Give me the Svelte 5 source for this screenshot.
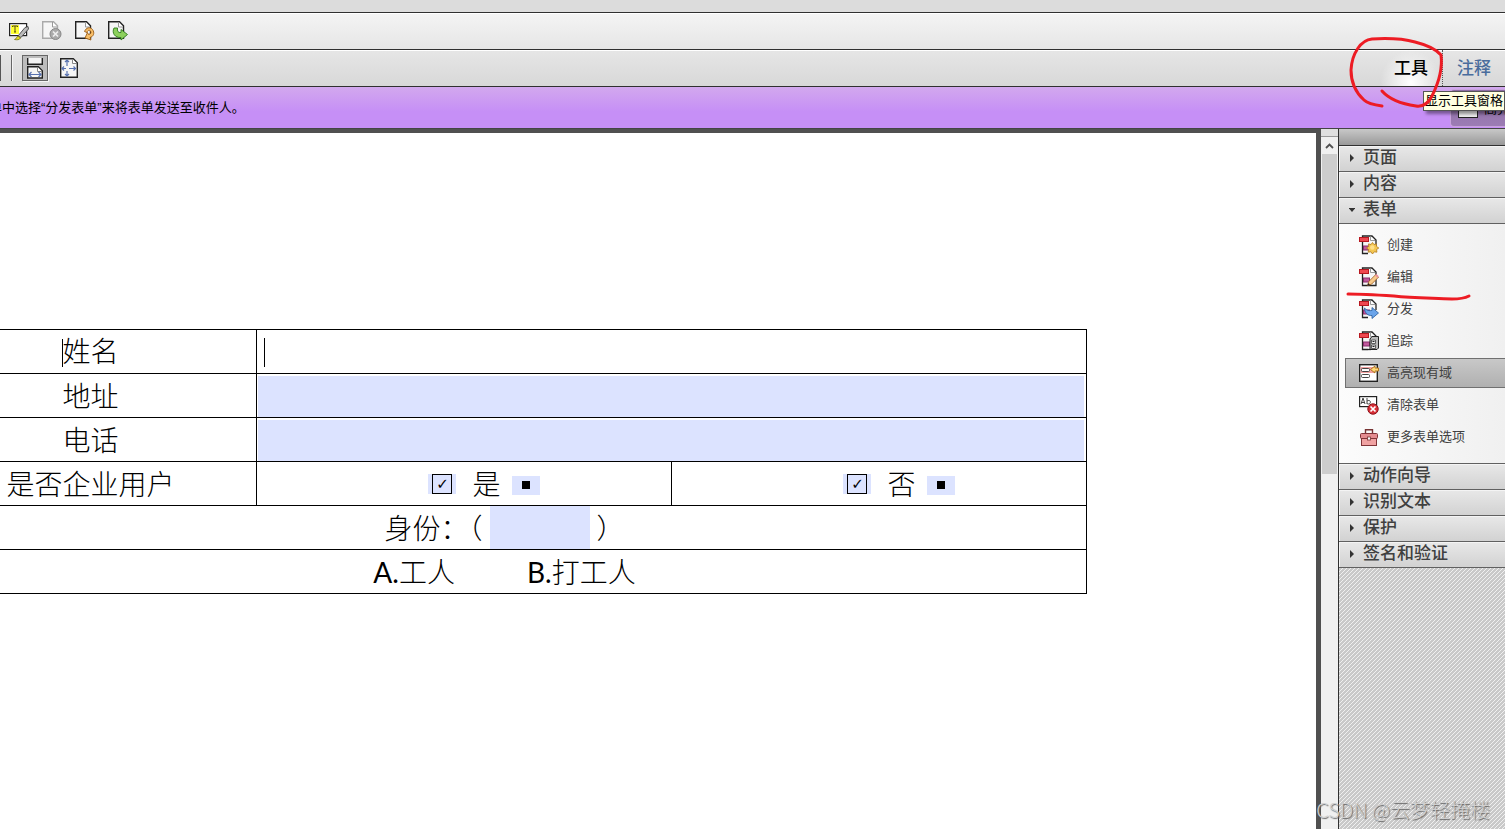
<script lang="ts">
	type Section = { title: string; open?: boolean };

	const top: Section[] = [{ title: '页面' }, { title: '内容' }, { title: '表单', open: true }];
	const bottom: Section[] = [
		{ title: '动作向导' },
		{ title: '识别文本' },
		{ title: '保护' },
		{ title: '签名和验证' }
	];

	const formTools = [
		{ icon: 'create', label: '创建' },
		{ icon: 'edit', label: '编辑' },
		{ icon: 'send', label: '分发' },
		{ icon: 'track', label: '追踪' },
		{ icon: 'highlight', label: '高亮现有域' },
		{ icon: 'clear', label: '清除表单' },
		{ icon: 'more', label: '更多表单选项' }
	];

	let active = $state('highlight');
	let name = $state('');
	let address = $state('');
	let phone = $state('');
	let identity = $state('');
	let yes = $state(true);
	let no = $state(true);
</script>

{#snippet sheet(color: string)}
	<path d="M.7 .7h10.800l4 4v12.600H.7z" fill="#f6f6f6" stroke={color} stroke-width="1.4" />
	<path d="M10.500 1v5H15" fill="#fff" stroke="#999" />
{/snippet}

{#snippet pdf()}
	<path d="M3.500 1.500h10l3.500 3.500v13.500H3.500z" fill="#f6f6f6" />
	<path d="M3.500 2V1H13l4 4v6M3.500 7v11.500H9" fill="none" stroke="#222" stroke-width="1.300" />
	<path d="M11.500 1.500v4H16" fill="#fff" stroke="#999" />
	<rect x="4.500" y="11" width="6" height="4" fill="#c05a9c" stroke="#8a2c6c" />
	<rect x=".5" y="2.500" width="9" height="4" fill="#ee4850" stroke="#b81820" />
{/snippet}

{#snippet toolIcon(kind: string)}
	<svg class="icon" width="20" height="20" viewBox="0 0 20 20" aria-hidden="true">
		{#if kind === 'create'}
			{@render pdf()}
			<path d="M13.500 7.500l1.500 2 2.500-.6-.1 2.500 2.400 1.600-2.200 1.500.3 2.700-2.600-.4-1.800 2.200-1.600-2.200-2.700.4.400-2.700L7.500 13l2.200-1.600-.2-2.500 2.500.6z" fill="#f3c650" stroke="#b27a1c" stroke-width=".8" />
			<circle cx="13.300" cy="12.500" r="2.200" fill="#ffe08a" />
		{:else if kind === 'edit'}
			{@render pdf()}
			<path d="M17 12v6.500H9" fill="none" stroke="#222" stroke-width="1.300" />
			<path d="M8.500 18.500l1.300-4 7-7 2.700 2.700-7 7z" fill="#f8ca8a" stroke="#9a5a20" stroke-width=".8" />
			<path d="M16 8.300l1.500-1.400 2.300 2.300-1.500 1.500z" fill="#e8909a" />
			<path d="M8.300 18.700l.9-2.600 1.700 1.700z" fill="#222" />
		{:else if kind === 'send'}
			{@render pdf()}
			<path d="M5.500 9c2 2.500 4.500 3 7.500 2.500V8.500l6.500 5.500-6.500 5.500v-3C9 17 5.500 14 5.500 9z" fill="#6aa4ea" stroke="#245a9c" stroke-width=".8" />
		{:else if kind === 'track'}
			{@render pdf()}
			<path d="M9 18.500h3" stroke="#222" stroke-width="1.300" />
			<path d="M11 8l2-2.500h6.500V17L18 18.500h-7z" fill="#bbb" stroke="#222" />
			<path d="M12.500 9h4v3.500h-4zM12.500 14h4v3.500h-4z" fill="#eee" stroke="#444" stroke-width=".8" />
			<path d="M13.500 10.500h2M13.500 15.500h2" stroke="#222" />
		{:else if kind === 'highlight'}
			<rect x=".7" y="1.700" width="17.600" height="16.600" fill="#fff" stroke="#222" stroke-width="1.400" />
			<rect x="1.500" y="4" width="14" height="6" fill="#f2a0a0" />
			<rect x="2.500" y="5.500" width="8" height="3" rx="1" fill="#fff" stroke="#444" />
			<rect x="2.500" y="11.500" width="8" height="3" rx="1" fill="#fff" stroke="#444" />
			<path d="M11.500 6.500L16 3v2h3.500v3H16v2z" fill="#ffd878" stroke="#a86a10" stroke-width=".9" />
		{:else if kind === 'clear'}
			<rect x=".6" y="1.600" width="17" height="10" fill="#fff" stroke="#222" stroke-width="1.200" />
			<path d="M2 9l2-6 2 6M2.700 7.500h2.800M8 3v6M8 6c3-1.500 4 .5 3 2.500-1 .8-2 .6-3 0" fill="none" stroke="#444" />
			<circle cx="14" cy="14" r="5.200" fill="#d83038" stroke="#8e1018" />
			<path d="M11.500 11.500l5 5M16.500 11.500l-5 5" stroke="#fff" stroke-width="1.700" />
		{:else}
			<path d="M6.500 6V2.700h7V6" fill="none" stroke="#733" stroke-width="1.400" />
			<rect x="1.500" y="6.500" width="17" height="5" rx="1" fill="#e48c90" stroke="#803438" />
			<rect x="2.500" y="11.500" width="15" height="7" fill="#f0a2a2" stroke="#803438" />
			<rect x="8.500" y="10" width="3" height="3" fill="#fff" stroke="#733" stroke-width=".8" />
		{/if}
	</svg>
{/snippet}

{#snippet heading(section: Section)}
	<button class="heading" aria-expanded={!!section.open}>
		<svg width="6" height="8" viewBox="0 0 6 8" aria-hidden="true">
			{#if section.open}
				<path d="M-.5 2h7L3 6z" fill="#333" />
			{:else}
				<path d="M1 0l4 4-4 4z" fill="#333" />
			{/if}
		</svg>
		{section.title}
	</button>
{/snippet}

<div class="app">
	<div class="strip"></div>

	<div class="bar files">
		<button aria-label="高亮文本">
			<svg width="20" height="20" viewBox="0 0 20 20">
				<rect x=".6" y="2.600" width="17" height="12" fill="#fff" stroke="#222" stroke-width="1.200" />
				<rect x="2" y="4" width="8" height="9" fill="#ffff35" />
				<path d="M3.500 6V5h5v1M6 5v6M5 11h2" fill="none" stroke="#554a10" />
				<path d="M9 15l7-8.500 3-1 .5 2.500-7.500 8.500z" fill="#bbb" stroke="#444" stroke-width=".9" />
				<path d="M9 15l2.500 2c-1 2-3.500 2-6 1.500 2-.5 2-2.500 3.500-3.500z" fill="#e3dc26" stroke="#777016" stroke-width=".8" />
			</svg>
		</button>
		<button aria-label="删除" disabled>
			<svg width="20" height="20" viewBox="0 0 20 20">
				{@render sheet('#aaa')}
				<circle cx="13.500" cy="13" r="5.500" fill="#aaa" stroke="#888" />
				<path d="M11 10.500l5 5M16 10.500l-5 5" stroke="#eee" stroke-width="1.700" />
			</svg>
		</button>
		<button aria-label="恢复">
			<svg width="20" height="20" viewBox="0 0 20 20">
				{@render sheet('#222')}
				<path d="M9.500 10.500C11 6.500 15 5.500 17.500 8.500c2.500 3.500 1 7-2.500 8l1 2.500-6-2 2.500-5.500 1 2c2.500-.5 3-2 2-3.500-1.500-1.500-3-.5-3.500 1.500z" fill="#f8bf68" stroke="#9a5a14" stroke-width=".9" />
			</svg>
		</button>
		<button aria-label="导出">
			<svg width="20" height="20" viewBox="0 0 20 20">
				{@render sheet('#222')}
				<path d="M6 7c-2.500 5 1 10 7 9.500V19l6.500-5.500L13 8.500V11.500C10 12 9 10 9.500 7z" fill="#8dd05c" stroke="#2d7a1c" stroke-width=".9" />
			</svg>
		</button>
	</div>

	<div class="bar view">
		<span class="edge"></span>
		<span class="divider"></span>
		<button class="pressed" aria-label="适合宽度">
			<svg width="18" height="22" viewBox="0 0 18 22">
				<path d="M1.700 1v6.300h14.600V1" fill="#f4f4f4" stroke="#222" stroke-width="1.400" />
				<path d="M1.700 21V9.700h10.600l4 4V21z" fill="#f6f6f6" stroke="#222" stroke-width="1.400" />
				<path d="M11.500 10v4.500H16" fill="#fff" stroke="#888" />
				<path d="M3 17.500h12M5.500 15l-2.500 2.500L5.500 20M12.500 15l2.500 2.500-2.500 2.500" fill="none" stroke="#5872b0" stroke-width="1.200" />
			</svg>
		</button>
		<button class="fit" aria-label="适合页面">
			<svg width="18" height="20" viewBox="0 0 18 20">
				<path d="M.7 .7h12.600l4 4v14.600H.7z" fill="#f6f6f6" stroke="#222" stroke-width="1.400" />
				<path d="M12.500 1v4.500H17" fill="#fff" stroke="#888" />
				<path d="M7 8V2M5 4l2-2 2 2M7 13v5M5 16l2 2 2-2M6 10.500H2M4 8.500l-2 2 2 2M9 10.500h6.500M13.500 8.500l2 2-2 2" fill="none" stroke="#5872b0" stroke-width="1.200" />
			</svg>
		</button>
		<nav>
			<button class="tab current">工具</button>
			<button class="tab">注释</button>
			<span class="tooltip" role="tooltip">显示工具窗格</span>
		</nav>
	</div>

	<div class="message">
		<p>单中选择“分发表单”来将表单发送至收件人。</p>
		<button><span class="field"></span>高亮现有域</button>
	</div>

	<div class="body">
		<main>
			<div class="page">
				<table>
					<colgroup>
						<col class="first" />
						<col />
						<col />
					</colgroup>
					<tbody>
						<tr>
							<th><span class="caret"></span><label for="name">姓名</label></th>
							<td colspan="2"><input id="name" class="text plain" bind:value={name} /><span class="cursor"></span></td>
						</tr>
						<tr>
							<th><label for="address">地址</label></th>
							<td colspan="2"><input id="address" class="text" bind:value={address} /></td>
						</tr>
						<tr>
							<th><label for="phone">电话</label></th>
							<td colspan="2"><input id="phone" class="text" bind:value={phone} /></td>
						</tr>
						<tr>
							<th>是否企业用户</th>
							<td>
								<div class="choice">
									<span class="tick"><input id="yes" type="checkbox" bind:checked={yes} /></span>
									<label for="yes">是</label>
									<input class="dot" type="radio" name="yes" aria-label="是" checked />
								</div>
							</td>
							<td>
								<div class="choice">
									<span class="tick"><input id="no" type="checkbox" bind:checked={no} /></span>
									<label for="no">否</label>
									<input class="dot" type="radio" name="no" aria-label="否" checked />
								</div>
							</td>
						</tr>
						<tr>
							<td colspan="3">
								<div class="identity">
									<label for="identity">身份：（</label>
									<input id="identity" bind:value={identity} />
									<span>）</span>
								</div>
							</td>
						</tr>
						<tr>
							<td colspan="3">
								<div class="answers">
									<span><b>A.</b>工人</span>
									<span><b>B.</b>打工人</span>
								</div>
							</td>
						</tr>
					</tbody>
				</table>
			</div>
		</main>

		<div class="scroll">
			<div class="split"></div>
			<button aria-label="向上滚动">
				<svg width="9" height="6" viewBox="0 0 9 6"><path d="M1 5l3.500-3.500L8 5" fill="none" stroke="#505050" stroke-width="1.800" /></svg>
			</button>
			<div class="track"><div class="thumb"></div></div>
		</div>

		<aside>
			<div class="cap"></div>
			{#each top as section}
				{@render heading(section)}
			{/each}
			<ul>
				{#each formTools as tool}
					<li>
						<button class="tool" class:active={active === tool.icon} onclick={() => (active = tool.icon)}>
							{@render toolIcon(tool.icon)}
							<span>{tool.label}</span>
						</button>
					</li>
				{/each}
			</ul>
			{#each bottom as section}
				{@render heading(section)}
			{/each}
			<div class="hatch"></div>
		</aside>
	</div>

	<svg class="marks" width="160" height="310" viewBox="1345 0 160 310" aria-hidden="true">
		<path d="M1382 106C1374 105 1368 104 1364 100C1354 91 1351 81 1351 70C1352 53 1361 40 1372 39C1389 38 1404 39 1415 42C1427 45 1436 49 1441 55C1443 70 1438 84 1432 96C1428 104 1423 107 1416 106C1402 104 1389 99 1382 91" />
		<path d="M1348 294C1362 294 1378 295 1394 296C1412 298 1432 298 1452 299C1460 299 1465 298 1469 296" />
	</svg>
	<span class="watermark">CSDN @云梦轻掩楼</span>
</div>

<style>
	:global(body) {
		margin: 0;
		font-family: "Liberation Sans", "Noto Sans CJK SC", sans-serif;
		font-size: 13px;
		color: #000;
	}

	button {
		display: flex;
		align-items: center;
		margin: 0;
		padding: 0;
		border: none;
		background: none;
		font: inherit;
		color: inherit;
		white-space: nowrap;
	}

	input {
		box-sizing: border-box;
		margin: 0;
		border: none;
		border-radius: 0;
		background: #dce3ff;
		font: inherit;
	}

	svg {
		display: block;
		flex: none;
	}

	.app {
		position: relative;
		display: flex;
		flex-direction: column;
		min-height: 100vh;
		overflow: hidden;
	}

	.strip {
		height: 12px;
		background: #dcdcdc;
		border-bottom: 1px solid #303030;
	}

	.bar {
		box-sizing: border-box;
		display: flex;
		align-items: center;
		height: 37px;
		border-bottom: 1px solid #303030;
		box-shadow: inset 0 1px #fff;
	}

	.files {
		gap: 13px;
		padding-left: 9px;
		background: linear-gradient(#f4f4f4, #e6e6e6);
	}

	.view {
		background: linear-gradient(#e6e6e6, #d8d8d8);
	}

	.edge {
		width: 1px;
		height: 26px;
		background: #555;
	}

	.divider {
		width: 1px;
		height: 26px;
		margin: 0 10px;
		background: #666;
		box-shadow: 1px 0 #f4f4f4;
	}

	.pressed {
		box-sizing: border-box;
		justify-content: center;
		width: 26px;
		height: 26px;
		border: 1px solid #666;
		background: #bcbcbc;
		box-shadow: 1px 1px #f4f4f4;
	}

	.fit {
		margin-left: 12px;
	}

	nav {
		position: relative;
		display: flex;
		height: 100%;
		margin-left: auto;
	}

	.tab {
		justify-content: center;
		width: 62px;
		height: 100%;
		padding-bottom: 3px;
		font-size: 17px;
		font-weight: 500;
		color: #4a6c9c;
	}

	.tab.current {
		width: 63px;
		border-right: 1px dotted #555;
		background: radial-gradient(ellipse at 50% 90%, #fff, transparent 70%);
		color: #000;
	}

	.tooltip {
		position: absolute;
		z-index: 2;
		top: 41px;
		left: 43px;
		padding: 0 1px;
		border: 1px solid #555;
		background: #ffffe1;
		box-shadow: 3px 3px 3px #0006;
		line-height: 18px;
		white-space: nowrap;
	}

	.message {
		box-sizing: border-box;
		display: flex;
		justify-content: space-between;
		align-items: center;
		height: 42px;
		border-bottom: 1px solid #444;
		background: linear-gradient(#d2a8ee, #c68ff6 60%);
		white-space: nowrap;
	}

	.message p {
		margin: 0 0 2px -11px;
	}

	.message button {
		box-sizing: border-box;
		width: 55px;
		height: 38px;
		padding-left: 7px;
		gap: 6px;
		overflow: hidden;
		border: 1px solid #c8a4dc;
		border-right: none;
		border-radius: 4px 0 0 4px;
		background: linear-gradient(#8c6ca4, #9c7cb4);
	}

	.field {
		box-sizing: border-box;
		flex: none;
		width: 20px;
		height: 20px;
		border: 1px solid #222;
		background: #eee;
	}

	.body {
		display: flex;
		flex: 1;
	}

	main {
		display: flex;
		flex: 1;
		min-width: 0;
		padding: 4px 5px 0 0;
		background: #505050;
	}

	.page {
		flex: 1;
		min-width: 0;
		padding-top: 196px;
		background: #fff;
	}

	table {
		width: calc(100% - 151px);
		margin-left: -78px;
		border-collapse: collapse;
		table-layout: fixed;
		font-family: Lato, "Noto Sans CJK SC", sans-serif;
		font-size: 28px;
		font-weight: 300;
		line-height: 42px;
	}

	.first {
		width: 334px;
	}

	th,
	td {
		position: relative;
		box-sizing: border-box;
		height: 44px;
		padding: 0;
		border: 1px solid #000;
		font-weight: inherit;
	}

	th {
		padding-left: 2px;
	}

	.text {
		display: block;
		width: calc(100% - 3px);
		height: 41px;
		margin: 2px 0 0 1px;
		padding: 0 8px;
	}

	.plain {
		background: #fff;
	}

	.caret {
		display: inline-block;
		width: 1px;
		height: 28px;
		margin: 0 -1px 6px 0;
		background: #000;
		vertical-align: middle;
	}

	.cursor {
		position: absolute;
		top: 8px;
		left: 7px;
		width: 1px;
		height: 29px;
		background: #000;
	}

	.choice,
	.identity,
	.answers {
		display: flex;
		align-items: center;
		justify-content: center;
		height: 43px;
	}

	.choice {
		gap: 16px;
		padding-left: 40px;
	}

	.tick {
		display: flex;
		padding: 0 4px;
		background: #dce3ff;
	}

	.choice input {
		display: grid;
		place-items: center;
		appearance: none;
	}

	.tick input {
		width: 20px;
		height: 20px;
		border: 1px solid #000;
	}

	.tick input:checked::after {
		content: "✓";
		font: bold 15px/18px "DejaVu Sans", sans-serif;
	}

	.choice .dot {
		width: 28px;
		height: 19px;
		margin: 3px 0 0 -5px;
	}

	.dot:checked::after {
		content: "";
		width: 8px;
		height: 8px;
		background: #000;
	}

	.identity {
		gap: 7px;
	}

	.identity input {
		width: 100px;
		height: 43px;
	}

	.answers {
		gap: 72px;
	}

	.answers b {
		font-weight: 400;
	}

	.scroll {
		display: flex;
		flex-direction: column;
		width: 17px;
		background: #f0f0f0;
	}

	.split {
		height: 7px;
		border-bottom: 1px solid #999;
		background: #e0e0e0;
	}

	.scroll button {
		justify-content: center;
		height: 17px;
	}

	.track {
		flex: 1;
		padding: 0 1px;
	}

	.thumb {
		height: 320px;
		background: #cdcdcd;
	}

	aside {
		display: flex;
		flex-direction: column;
		width: 166px;
		border-left: 1px solid #303030;
	}

	.cap {
		height: 16px;
		border-bottom: 1px solid #303030;
		background: linear-gradient(#c8c8c8, #999);
	}

	.heading {
		box-sizing: border-box;
		gap: 8px;
		height: 26px;
		padding: 0 0 1px 10px;
		border-bottom: 1px solid #606060;
		background: linear-gradient(#e8e8e8, #d2d2d2);
		box-shadow: inset 1px 1px #f4f4f4;
		font-size: 17px;
		font-weight: 500;
		line-height: 22px;
		color: #404040;
	}

	ul {
		display: flex;
		flex-direction: column;
		gap: 2px;
		margin: 0;
		padding: 6px 0 11px 6px;
		border-bottom: 1px solid #606060;
		background: linear-gradient(to right, #fcfcfc, #f0f0f0);
		list-style: none;
	}

	.tool {
		box-sizing: border-box;
		gap: 8px;
		width: 100%;
		height: 30px;
		padding-left: 13px;
		border: 1px solid transparent;
		border-right: none;
		color: #404040;
	}

	.tool span {
		padding-bottom: 4px;
	}

	.tool.active {
		border-color: #707070;
		background: linear-gradient(#c8c8c8, #b0b0b0);
	}

	.hatch {
		flex: 1;
		background: #c9c9c9 url("data:image/svg+xml,%3Csvg xmlns='http://www.w3.org/2000/svg' width='4' height='4' shape-rendering='crispEdges'%3E%3Cpath d='M0 3h1v1H0zM1 2h1v1H1zM2 1h1v1H2zM3 0h1v1H3z' fill='%23f0f0f0'/%3E%3C/svg%3E");
	}

	.marks {
		position: absolute;
		z-index: 3;
		top: 0;
		right: 0;
		fill: none;
		stroke: #ed1c24;
		stroke-width: 3;
		stroke-linecap: round;
		pointer-events: none;
	}

	.watermark {
		position: absolute;
		right: 15px;
		bottom: 5px;
		font-family: "Noto Sans CJK SC", sans-serif;
		font-size: 20px;
		font-weight: 300;
		line-height: 28px;
		color: #d0d0d0;
		text-shadow: 1px 1px 1px #666;
		white-space: nowrap;
	}
</style>
